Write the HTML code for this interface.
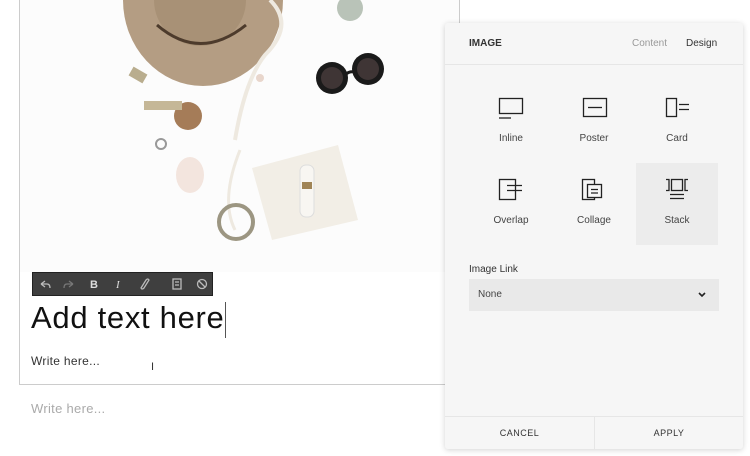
<!DOCTYPE html>
<html><head><meta charset="utf-8"><style>
*{margin:0;padding:0;box-sizing:border-box}
body{width:750px;height:456px;background:#fff;position:relative;overflow:hidden;font-family:"Liberation Sans",sans-serif}
.a{position:absolute}
.lbl{position:absolute;font-size:10px;color:#444;width:82px;text-align:center}
</style></head><body>
<div class="a" style="left:19px;top:0;width:441px;height:385px;border:1px solid #ccc;border-top:none"></div>
<svg class="a" style="left:20px;top:0" width="439" height="272">
<rect width="439" height="272" fill="#fcfcfc"/>
<ellipse cx="183" cy="0" rx="80" ry="86" fill="#b49d83"/>
<ellipse cx="180" cy="0" rx="46" ry="46" fill="#a89176"/>
<path d="M137 25 Q180 62 226 25" stroke="#4d3b2c" stroke-width="3" fill="none"/>
<circle cx="312" cy="78" r="16" fill="#1a1a1a"/><circle cx="348" cy="69" r="16" fill="#1a1a1a"/>
<circle cx="312" cy="78" r="11" fill="#3f3535"/><circle cx="348" cy="69" r="11" fill="#3f3535"/>
<path d="M326 74 q4 -3 8 -2" stroke="#1a1a1a" stroke-width="3" fill="none"/>
<circle cx="330" cy="8" r="13" fill="#b9c3b8"/>
<path d="M250 0 Q275 25 245 55 Q225 80 215 140" stroke="#eee9e0" stroke-width="4" fill="none"/>
<path d="M220 150 Q200 200 215 230" stroke="#eee9e0" stroke-width="3" fill="none"/>
<polygon points="232,168 318,145 338,220 252,240" fill="#f2eee6"/>
<rect x="280" y="165" width="14" height="52" rx="6" fill="#f8f6f2" stroke="#ddd"/>
<rect x="282" y="182" width="10" height="7" fill="#a08456"/>
<circle cx="216" cy="222" r="17" fill="none" stroke="#9c9682" stroke-width="4"/>
<circle cx="168" cy="116" r="14" fill="#a57c58"/>
<rect x="110" y="70" width="16" height="10" fill="#b9ad8e" transform="rotate(30 118 75)"/>
<rect x="124" y="101" width="38" height="9" fill="#c5b797"/>
<circle cx="141" cy="144" r="5" fill="none" stroke="#999" stroke-width="2"/>
<circle cx="240" cy="78" r="4" fill="#e8d6cc"/>
<ellipse cx="170" cy="175" rx="14" ry="18" fill="#f3e5de"/>
</svg>
<div class="a" style="left:32px;top:272px;width:181px;height:24px;background:#3f3f3f;border:1px solid #222"></div>
<svg class="a" style="left:32px;top:272px" width="181" height="24" fill="none" stroke="#bbb" stroke-width="1.3">
<path d="M9 12 l4-3 M9 12 l4 3 M9 12 h6 q3 0 3 4"/>
<path d="M41 12 l-4-3 M41 12 l-4 3 M41 12 h-6 q-3 0 -3 4" stroke="#777"/>
<text x="58" y="16" font-size="11" font-weight="bold" fill="#ddd" stroke="none" font-family="Liberation Sans">B</text>
<text x="84" y="16" font-size="11" font-style="italic" fill="#ddd" stroke="none" font-family="Liberation Serif">I</text>
<path d="M109 16 l5-8 q2-2 3 0 l-5 8 q-2 2 -3 0z"/>
<rect x="141" y="7" width="8" height="10"/><path d="M143 10 h4 M143 13 h4"/>
<circle cx="170" cy="12" r="4.5"/><path d="M167 9 l6 6"/>
</svg>
<div class="a" style="left:31px;top:300px;font-size:31px;color:#111;letter-spacing:.7px">Add text here</div>
<div class="a" style="left:225px;top:302px;width:1px;height:36px;background:#555"></div>
<div class="a" style="left:31px;top:354px;font-size:12px;color:#333;letter-spacing:.3px">Write here...</div>
<div class="a" style="left:151px;top:361px;font-size:11px;color:#333">I</div>
<div class="a" style="left:31px;top:401px;font-size:13px;color:#aaa;letter-spacing:.3px">Write here...</div>

<div class="a" style="left:445px;top:23px;width:298px;height:426px;background:#f6f6f6;border-radius:3px;box-shadow:0 1px 6px rgba(0,0,0,.18)"></div>
<div class="a" style="left:469px;top:38px;font-size:10px;font-weight:bold;color:#333">IMAGE</div>
<div class="a" style="left:632px;top:38px;font-size:10px;color:#999">Content</div>
<div class="a" style="left:686px;top:38px;font-size:10px;color:#333">Design</div>
<div class="a" style="left:445px;top:64px;width:298px;height:1px;background:#e6e6e6"></div>
<div class="a" style="left:636px;top:163px;width:82px;height:82px;background:#ececec"></div>
<svg class="a" style="left:445px;top:80px" width="298" height="140" fill="none" stroke="#222" stroke-width="1.3">
<rect x="54.5" y="18.5" width="23" height="15"/><path d="M54 38 h12"/>
<rect x="138.5" y="18.5" width="23" height="18"/><path d="M143 27.5 h14"/>
<rect x="221.5" y="18.5" width="10" height="18"/><path d="M234 24.5 h10 M234 29.5 h10"/>
<rect x="54.5" y="99.5" width="16" height="20"/><path d="M62 105.5 h15 M62 110.5 h15"/>
<rect x="137.5" y="99.5" width="12" height="20"/><rect x="142.5" y="104.5" width="14" height="13" fill="#f6f6f6"/><path d="M146 109.5 h7 M146 113 h7"/>
<path d="M221 99.5 h3 v11 h-3"/><rect x="226.5" y="99.5" width="11" height="11"/><path d="M243 99.5 h-3 v11 h3"/><path d="M225 114.5 h14 M225 118.5 h14"/>
</svg>
<div class="lbl" style="left:470px;top:133px">Inline</div>
<div class="lbl" style="left:553px;top:133px">Poster</div>
<div class="lbl" style="left:636px;top:133px">Card</div>
<div class="lbl" style="left:470px;top:215px">Overlap</div>
<div class="lbl" style="left:553px;top:215px">Collage</div>
<div class="lbl" style="left:636px;top:215px">Stack</div>
<div class="a" style="left:469px;top:264px;font-size:10px;color:#333">Image Link</div>
<div class="a" style="left:469px;top:279px;width:250px;height:32px;background:#e9e9e9"></div>
<div class="a" style="left:478px;top:289px;font-size:10px;color:#444">None</div>
<svg class="a" style="left:697px;top:291px" width="10" height="8"><path d="M2 2 l3 3 l3-3" stroke="#222" stroke-width="1.6" fill="none"/></svg>
<div class="a" style="left:445px;top:416px;width:298px;height:1px;background:#e6e6e6"></div>
<div class="a" style="left:594px;top:417px;width:1px;height:32px;background:#e6e6e6"></div>
<div class="a" style="left:445px;top:428px;width:149px;text-align:center;font-size:9px;color:#333;letter-spacing:.5px">CANCEL</div>
<div class="a" style="left:595px;top:428px;width:148px;text-align:center;font-size:9px;color:#333;letter-spacing:.5px">APPLY</div>
</body></html>
